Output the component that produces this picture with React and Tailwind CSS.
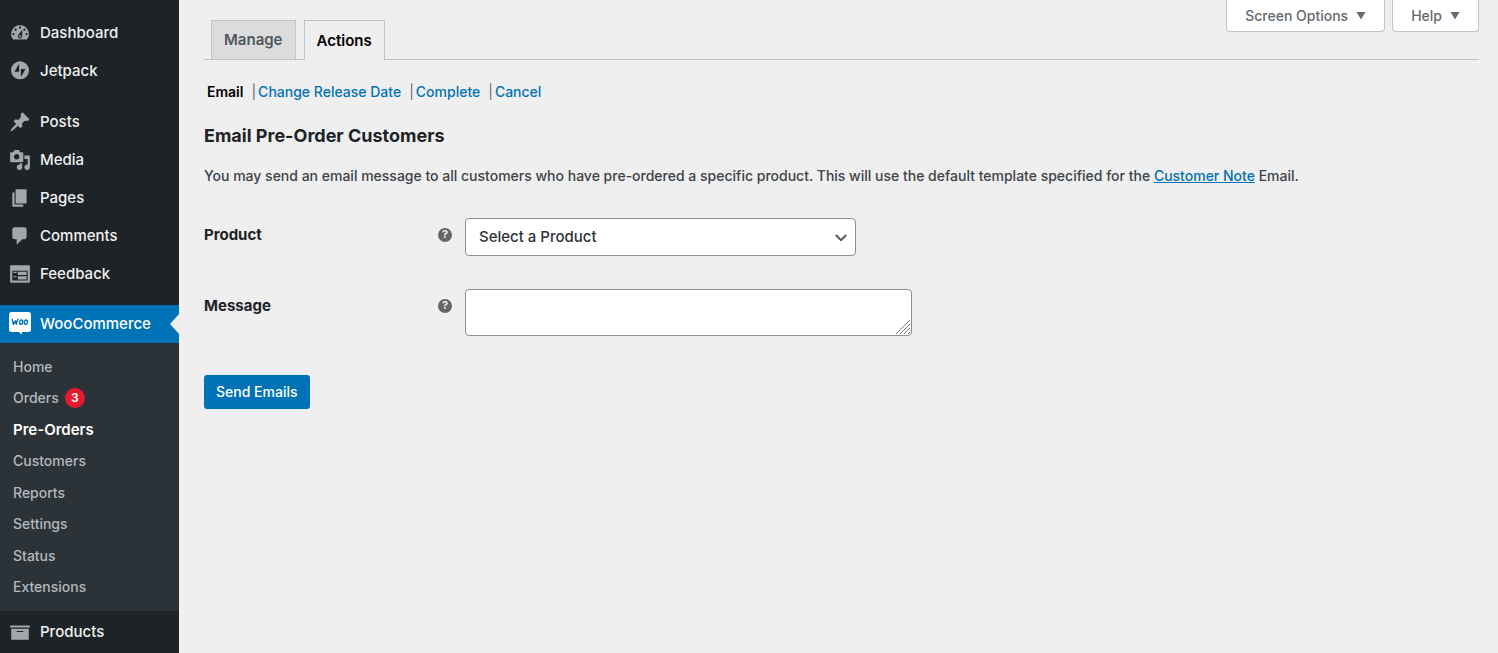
import React, { useState } from 'react';

const ICONS = {
  dashboard:
    'M3.76 16h12.48A7.998 7.998 0 0 0 10 3a7.998 7.998 0 0 0-6.24 13zM10 4c.55 0 1 .45 1 1s-.45 1-1 1-1-.45-1-1 .45-1 1-1zM6 6c.55 0 1 .45 1 1s-.45 1-1 1-1-.45-1-1 .45-1 1-1zm8 0c.55 0 1 .45 1 1s-.45 1-1 1-1-.45-1-1 .45-1 1-1zm-5.37 5.55L12 7v6c0 1.1-.9 2-2 2s-2-.9-2-2c0-.57.24-1.08.63-1.45zM4 10c.55 0 1 .45 1 1s-.45 1-1 1-1-.45-1-1 .45-1 1-1zm12 0c.55 0 1 .45 1 1s-.45 1-1 1-1-.45-1-1 .45-1 1-1zm-5 3c0-.55-.45-1-1-1s-1 .45-1 1 .45 1 1 1 1-.45 1-1z',
  jetpack:
    'M10 1.2a8.2 8.2 0 1 0 0 16.4 8.2 8.2 0 0 0 0-16.4zM9.2 10.7H4.9L9.2 3.4v7.3zM10.8 15.4V8.1h4.3l-4.3 7.3z',
  posts:
    'M10.44 3.02l1.82-1.82 6.36 6.35-1.83 1.82c-1.05-.68-2.48-.57-3.41.36l-.75.75c-.92.93-1.04 2.35-.35 3.41l-1.83 1.82-2.41-2.41-2.8 2.79c-.42.42-3.38 2.71-3.8 2.29s1.86-3.39 2.28-3.81l2.79-2.79L4.1 9.36l1.83-1.82c1.05.69 2.48.57 3.4-.36l.75-.75c.93-.92 1.05-2.35.36-3.41z',
  media:
    'M13 11V4c0-.55-.45-1-1-1h-1.67L9 1H5L3.67 3H2c-.55 0-1 .45-1 1v7c0 .55.45 1 1 1h10c.55 0 1-.45 1-1zM7 4.5c1.38 0 2.5 1.12 2.5 2.5S8.38 9.5 7 9.5 4.5 8.38 4.5 7 5.62 4.5 7 4.5zM14 6h5v10.5c0 1.38-1.12 2.5-2.5 2.5S14 17.88 14 16.5s1.12-2.5 2.5-2.5c.17 0 .34.02.5.05V9h-3V6zm-4 8.05V13h2v3.5c0 1.38-1.12 2.5-2.5 2.5S7 17.88 7 16.5 8.12 14 9.5 14c.17 0 .34.02.5.05z',
  pages: 'M6 15V2h10v13H6zm-1 1h8v2H3V5h2v11z',
  comments: 'M5 2h9c1.1 0 2 .9 2 2v7c0 1.1-.9 2-2 2h-2l-5 5v-5H5c-1.1 0-2-.9-2-2V4c0-1.1.9-2 2-2z',
  feedback:
    'M2 2h16c.55 0 1 .45 1 1v14c0 .55-.45 1-1 1H2c-.55 0-1-.45-1-1V3c0-.55.45-1 1-1zm15 14V7H3v9h14zM4 8v1h3V8H4zm4 0v3h8V8H8zm-4 4v1h3v-1H4zm4 0v3h8v-3H8z',
  products: 'M19 4v2H1V4h18zM2 7h16v10H2V7zm11 3V9H7v1h6z',
};

const TOP_ITEMS = [
  { label: 'Dashboard', icon: 'dashboard' },
  { label: 'Jetpack', icon: 'jetpack' },
];

const CONTENT_ITEMS = [
  { label: 'Posts', icon: 'posts' },
  { label: 'Media', icon: 'media' },
  { label: 'Pages', icon: 'pages' },
  { label: 'Comments', icon: 'comments' },
  { label: 'Feedback', icon: 'feedback' },
];

const WOO_ITEMS = [
  { label: 'Home' },
  { label: 'Orders', count: 3 },
  { label: 'Pre-Orders', current: true },
  { label: 'Customers' },
  { label: 'Reports' },
  { label: 'Settings' },
  { label: 'Status' },
  { label: 'Extensions' },
];

const ACTION_LINKS = ['Email', 'Change Release Date', 'Complete', 'Cancel'];

function MenuItem({ label, icon }) {
  return (
    <li>
      <a href="#" className="flex h-[38px] items-center gap-2 pl-2 text-[#f0f0f1] hover:text-[#72aee6]">
        <svg viewBox="0 0 20 20" className="size-6 shrink-0 p-px text-[#a0a7ad]" fill="currentColor" fillRule="evenodd" aria-hidden="true">
          <path d={ICONS[icon]} />
        </svg>
        {label}
      </a>
    </li>
  );
}

function WooLogo() {
  return (
    <svg viewBox="0 0 24 24" className="size-6 shrink-0" aria-hidden="true">
      <path fill="#fff" d="M3.500 0h17A2.500 2.500 0 0 1 23 2.500v15a2.500 2.500 0 0 1-2.500 2.500h-6.500l-.5 2.500-2.500-2.500H3.500A2.500 2.500 0 0 1 1 17.500v-15A2.500 2.500 0 0 1 3.500 0z" />
      <path
        d="M4.200 7.400l1.200 5 2-3.600.9 3.600c.3-2 .9-3.600 1.600-5"
        fill="none"
        stroke="#0073b6"
        strokeWidth="1.400"
        strokeLinecap="round"
        strokeLinejoin="round"
      />
      <ellipse cx="13.200" cy="10.200" rx="1.500" ry="2.200" transform="rotate(12 13.200 10.200)" fill="none" stroke="#0073b6" strokeWidth="1.400" />
      <ellipse cx="17.900" cy="10.200" rx="1.500" ry="2.200" transform="rotate(12 17.900 10.200)" fill="none" stroke="#0073b6" strokeWidth="1.400" />
    </svg>
  );
}

function Sidebar() {
  return (
    <nav aria-label="Main menu" className="w-[179px] shrink-0 bg-[#1d2327] pt-3.5 text-[15px]">
      <ul>
        {TOP_ITEMS.map((item) => (
          <MenuItem key={item.label} {...item} />
        ))}
      </ul>
      <ul className="pb-3 pt-[13px]">
        {CONTENT_ITEMS.map((item) => (
          <MenuItem key={item.label} {...item} />
        ))}
      </ul>
      <a href="#" className="relative flex h-[38px] items-center gap-2 bg-[#0073b6] pl-2 text-white">
        <WooLogo />
        WooCommerce
        {/* pointer towards the content area */}
        <span className="absolute right-0 top-1/2 -translate-y-1/2 border-y-[10px] border-r-[9px] border-y-transparent border-r-[#efefef]" />
      </a>
      <ul className="flex h-[268px] flex-col bg-[#2c3338] py-2 text-sm">
        {WOO_ITEMS.map(({ label, count, current }) => (
          <li key={label} className="flex-1">
            <a
              href="#"
              className={`flex h-full items-center gap-1.5 pl-[13px] ${
                current ? 'text-[15px] font-semibold text-white' : 'text-[#b4b9be]'
              }`}
            >
              {label}
              {count && (
                <span className="flex size-5 items-center justify-center rounded-full bg-[#e8192c] text-xs font-semibold text-white">
                  {count}
                </span>
              )}
            </a>
          </li>
        ))}
      </ul>
      <ul className="pt-0.5">
        <MenuItem label="Products" icon="products" />
      </ul>
    </nav>
  );
}

function ScreenMetaButton({ children }) {
  return (
    <button
      type="button"
      className="flex h-8 items-center gap-2 rounded-b border border-t-0 border-[#c3c4c7] bg-white px-[18px] text-sm font-medium text-[#646970]"
    >
      {children}
      <svg viewBox="0 0 10 8" className="h-2 w-2.5" fill="currentColor" aria-hidden="true">
        <path d="M.5 0h9L5 7.500z" />
      </svg>
    </button>
  );
}

function HelpTip({ text }) {
  return (
    <span title={text} className="flex size-[14px] items-center justify-center rounded-full bg-[#666] text-[11px] font-bold text-[#efefef]">
      ?
    </span>
  );
}

function FormRow({ id, label, tip, children }) {
  return (
    <div className="flex items-start">
      <div className="flex w-[261px] shrink-0 items-center justify-between pr-[13px] pt-[5px]">
        <label htmlFor={id} className="text-[15px] font-bold leading-6 text-[#1d2327]">
          {label}
        </label>
        <HelpTip text={tip} />
      </div>
      {children}
    </div>
  );
}

export default function App() {
  const [product, setProduct] = useState('');
  const [message, setMessage] = useState('');

  return (
    <div className="flex min-h-screen bg-[#efefef] font-['Inter',sans-serif] text-sm font-medium text-[#3c434a]">
      <Sidebar />

      <main className="min-w-0 flex-1 pl-[25px] pr-[19px]">
        <header className="flex items-start justify-between border-b border-[#c3c4c7] pl-[7px]">
          <div className="-mb-px flex gap-2 pt-5 text-[15px] font-semibold">
            <a href="#" className="flex h-10 items-center border border-[#c3c4c7] bg-[#dcdcde] px-3 text-[#50575e]">
              Manage
            </a>
            <a href="#" className="flex h-10 items-center border border-b-0 border-[#c3c4c7] bg-[#efefef] px-3 text-black">
              Actions
            </a>
          </div>
          <div className="flex gap-[7px]">
            <ScreenMetaButton>Screen Options</ScreenMetaButton>
            <ScreenMetaButton>Help</ScreenMetaButton>
          </div>
        </header>

        <ul className="mt-5 flex pl-[3px] leading-6">
          {ACTION_LINKS.map((label, i) => (
            <li key={label} className="flex">
              <a href="#" className={i === 0 ? 'font-semibold text-black' : 'text-[#0073b6]'}>
                {label}
              </a>
              {i < ACTION_LINKS.length - 1 && <span className="pl-2 pr-0.5 font-normal text-[#646970]">|</span>}
            </li>
          ))}
        </ul>

        <h2 className="mt-5 text-lg font-bold leading-6 text-[#1d2327]">Email Pre-Order Customers</h2>
        <p className="mt-4 leading-6">
          You may send an email message to all customers who have pre-ordered a specific product. This will use the default
          template specified for the{' '}
          <a href="#" className="text-[#0073b6] underline">
            Customer Note
          </a>{' '}
          Email.
        </p>

        <form className="mt-[30px]" onSubmit={(e) => e.preventDefault()}>
          <div className="flex flex-col gap-[33px]">
            <FormRow id="product" label="Product" tip="Select which product to email customers about">
              <div className="relative w-[391px]">
                <select
                  id="product"
                  value={product}
                  onChange={(e) => setProduct(e.target.value)}
                  className="block h-[38px] w-full appearance-none rounded border border-[#8c8f94] bg-white pl-[13px] pr-8 text-[15px] text-[#2c3338]"
                >
                  <option value="">Select a Product</option>
                </select>
                <svg
                  viewBox="0 0 12 8"
                  className="pointer-events-none absolute right-[9px] top-4 h-2 w-3"
                  fill="none"
                  stroke="#50575e"
                  strokeWidth="2"
                  aria-hidden="true"
                >
                  <path d="M.8 1L6 6.200 11.200 1" />
                </svg>
              </div>
            </FormRow>
            <FormRow id="message" label="Message" tip="Enter the message to include in the email">
              <div className="relative w-[447px]">
                <textarea
                  id="message"
                  value={message}
                  onChange={(e) => setMessage(e.target.value)}
                  className="block h-[47px] w-full resize-none rounded border border-[#8c8f94] bg-white px-2 py-1"
                />
                <svg
                  viewBox="0 0 14 14"
                  className="pointer-events-none absolute bottom-0.5 right-0.5 size-[14px]"
                  stroke="#777"
                  aria-hidden="true"
                >
                  <path d="M0 14L14 0M4 14L14 4M8 14l6-6M12 14l2-2" />
                </svg>
              </div>
            </FormRow>
          </div>
          <button type="submit" className="mt-[39px] h-[34px] rounded-[3px] bg-[#0073b6] px-3 text-sm font-medium text-white">
            Send Emails
          </button>
        </form>
      </main>
    </div>
  );
}
